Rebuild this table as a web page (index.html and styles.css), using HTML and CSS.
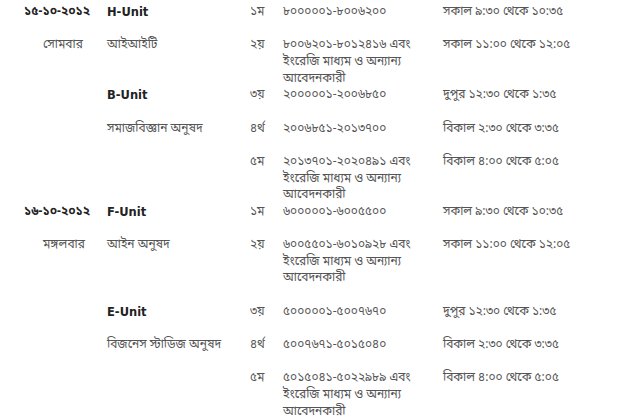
FILE: index.html
```html
<!DOCTYPE html>
<html lang="bn">
<head>
<meta charset="utf-8">
<title>ভর্তি পরীক্ষার সময়সূচি</title>
<link rel="stylesheet" href="styles.css">
</head>
<body>
<div class="schedule">
  <div class="row pad">
    <div class="date">১৫-১০-২০১২</div><div class="unit">H-Unit</div><div>১ম</div><div>৮০০০০০১-৮০০৬২০০</div><div>সকাল ৯:৩০ থেকে ১০:৩৫</div>
  </div>
  <div class="row">
    <div class="day">সোমবার</div><div>আইআইটি</div><div>২য়</div><div>৮০০৬২০১-৮০১২৪১৬ এবং<br>ইংরেজি মাধ্যম ও অন্যান্য<br>আবেদনকারী</div><div>সকাল ১১:০০ থেকে ১২:০৫</div>
  </div>
  <div class="row pad">
    <div></div><div class="unit">B-Unit</div><div>৩য়</div><div>২০০০০০১-২০০৬৮৫০</div><div>দুপুর ১২:৩০ থেকে ১:৩৫</div>
  </div>
  <div class="row pad">
    <div></div><div>সমাজবিজ্ঞান অনুষদ</div><div>৪র্থ</div><div>২০০৬৮৫১-২০১৩৭০০</div><div>বিকাল ২:৩০ থেকে ৩:৩৫</div>
  </div>
  <div class="row">
    <div></div><div></div><div>৫ম</div><div>২০১৩৭০১-২০২০৪৯১ এবং<br>ইংরেজি মাধ্যম ও অন্যান্য<br>আবেদনকারী</div><div>বিকাল ৪:০০ থেকে ৫:০৫</div>
  </div>
  <div class="row pad">
    <div class="date">১৬-১০-২০১২</div><div class="unit">F-Unit</div><div>১ম</div><div>৬০০০০০১-৬০০৫৫০০</div><div>সকাল ৯:৩০ থেকে ১০:৩৫</div>
  </div>
  <div class="row pad">
    <div class="day">মঙ্গলবার</div><div>আইন অনুষদ</div><div>২য়</div><div>৬০০৫৫০১-৬০১০৯২৮ এবং<br>ইংরেজি মাধ্যম ও অন্যান্য<br>আবেদনকারী</div><div>সকাল ১১:০০ থেকে ১২:০৫</div>
  </div>
  <div class="row pad">
    <div></div><div class="unit">E-Unit</div><div>৩য়</div><div>৫০০০০০১-৫০০৭৬৭০</div><div>দুপুর ১২:৩০ থেকে ১:৩৫</div>
  </div>
  <div class="row pad">
    <div></div><div>বিজনেস স্টাডিজ অনুষদ</div><div>৪র্থ</div><div>৫০০৭৬৭১-৫০১৫০৪০</div><div>বিকাল ২:৩০ থেকে ৩:৩৫</div>
  </div>
  <div class="row">
    <div></div><div></div><div>৫ম</div><div>৫০১৫০৪১-৫০২২৯৮৯ এবং<br>ইংরেজি মাধ্যম ও অন্যান্য<br>আবেদনকারী</div><div>বিকাল ৪:০০ থেকে ৫:০৫</div>
  </div>
</div>
</body>
</html>
```

FILE: styles.css
```css
html, body {
  margin: 0;
  padding: 0;
  background: #ffffff;
}

body {
  padding: 4px 0 0 22px;
  font-family: "Noto Sans Bengali", "Noto Serif Bengali", "Lohit Bengali", "FreeSerif", "Noto Sans", sans-serif;
  font-size: 12px;
  color: #555555;
}

.schedule {
  display: grid;
  grid-template-columns: 85px 143px 33px 160px 180px;
  line-height: 16.65px;
  white-space: nowrap;
}

.row {
  display: contents;
}

.row.pad > div {
  padding-bottom: 16.65px;
}

.date {
  padding-left: 2px;
  font-weight: bold;
  color: #222222;
}

.day {
  padding-left: 21px;
}

.unit {
  font-family: "DejaVu Sans", Verdana, sans-serif;
  font-weight: bold;
  font-size: 11.5px;
  color: #222222;
}
```
